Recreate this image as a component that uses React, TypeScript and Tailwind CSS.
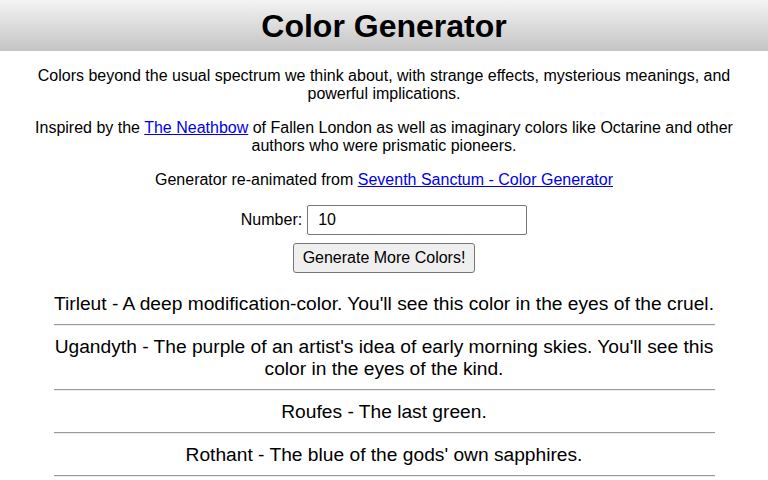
import { useState } from 'react';

const colors = [
  "Tirleut - A deep modification-color. You'll see this color in the eyes of the cruel.",
  "Ugandyth - The purple of an artist's idea of early morning skies. You'll see this color in the eyes of the kind.",
  'Roufes - The last green.',
  "Rothant - The blue of the gods' own sapphires.",
  "Vosk - The gray of a forgotten promise. You'll see this color in the eyes of the lonely.",
];

export default function App() {
  const [count, setCount] = useState('10');

  return (
    <div className="min-h-screen bg-white text-black font-['Liberation_Sans',Arial,sans-serif]">
      {/* Header */}
      <div className="h-[51px] flex items-center justify-center bg-gradient-to-b from-[#f4f4f4] to-[#c4c4c4]">
        <h1 className="text-[32px] font-bold leading-none">Color Generator</h1>
      </div>

      <div className="px-4 text-center text-base leading-[18px]">
        <p className="mt-4">
          Colors beyond the usual spectrum we think about, with strange effects, mysterious meanings, and powerful
          implications.
        </p>
        <p className="mt-4">
          Inspired by the{' '}
          <a href="#" className="text-[#0000ee] underline">
            The Neathbow
          </a>{' '}
          of Fallen London as well as imaginary colors like Octarine and other authors who were prismatic pioneers.
        </p>
        <p className="mt-4">
          Generator re-animated from{' '}
          <a href="#" className="text-[#0000ee] underline">
            Seventh Sanctum - Color Generator
          </a>
        </p>

        <div className="mt-4 flex items-center justify-center gap-[5px]">
          <label htmlFor="num">Number:</label>
          <input
            id="num"
            value={count}
            onChange={e => setCount(e.target.value)}
            className="w-[220px] h-[30px] px-[10px] border border-[#767676] rounded-[2px] text-base"
          />
        </div>
        <div className="mt-2 flex justify-center">
          <button className="h-[30px] px-[9px] bg-[#efefef] border border-[#767676] rounded-[3px] text-base">
            Generate More Colors!
          </button>
        </div>
      </div>

      {/* Color list */}
      <div className="w-[661px] mx-auto mt-[10px] text-center text-[19.2px] leading-[22px]">
        {colors.map((c, i) => (
          <div key={i}>
            <div className="pt-[10px] pb-[9px]">{c}</div>
            <div className="border-t border-t-[#9a9a9a] border-b border-b-[#eeeeee]" />
          </div>
        ))}
      </div>
    </div>
  );
}
